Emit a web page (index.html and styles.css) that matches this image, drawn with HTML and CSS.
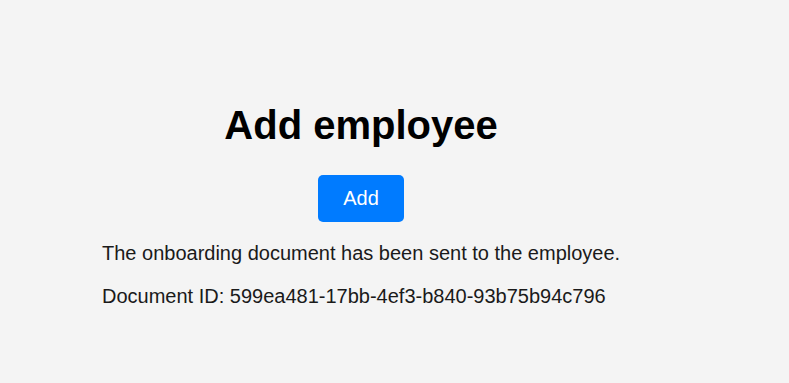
FILE: index.html
```html
<!DOCTYPE html>
<html lang="en">
<head>
  <meta charset="UTF-8" />
  <title>Add employee</title>
  <meta name="viewport" content="width=device-width, initial-scale=1.0" />
  <link rel="stylesheet" href="styles.css">
</head>
<body>
  <div class="main">
    <div class="onboard-box">
      <h1>Add employee</h1>
      <div class="actions">
        <button id="addBtn">Add</button>
      </div>
      <p>The onboarding document has been sent to the employee.</p>
      <p>Document ID: 599ea481-17bb-4ef3-b840-93b75b94c796</p>
    </div>
  </div>
</body>
</html>
```

FILE: styles.css
```css
body {
  margin: 0;
  font-family: 'Liberation Sans', Arial, sans-serif;
  font-size: 20px;
  background: #f4f4f4;
  color: #1a1a1a;
}

.main {
  padding: 76px 0 0 102px;
}

.onboard-box {
  width: fit-content;
}

.onboard-box h1 {
  font-size: 40px;
  margin: 26.8px 0;
  text-align: center;
  color: #000;
}

.actions {
  text-align: center;
}

.actions button {
  background: #007bff;
  color: #fff;
  border: none;
  border-radius: 5px;
  padding: 12px 25px;
  font-family: inherit;
  font-size: 20px;
  cursor: pointer;
}

.onboard-box p {
  margin: 20px 0;
}
```
